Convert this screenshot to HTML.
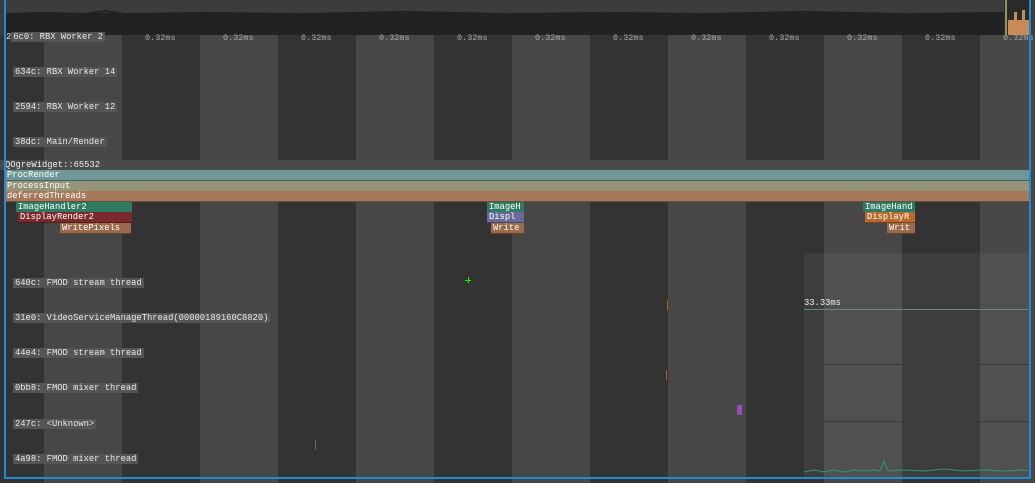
<!DOCTYPE html><html><head><style>
body{margin:0;width:1035px;height:483px;overflow:hidden;background:#333;position:relative;font-family:"Liberation Mono",monospace;font-size:8.8px;color:#ddd}
div{position:absolute;box-sizing:border-box}
.c{top:35px;bottom:0;width:78px;background:#474747}
.t{top:33px;font-size:8.5px;color:#aaa}
.l{left:13px;height:11px;line-height:11px;color:#e8e8e8}
.l span{background:#555;padding:0 2px}
.b{height:11px;line-height:11px;color:#fff;padding-left:2px;white-space:nowrap;overflow:hidden;border-bottom:1px solid rgba(0,0,0,.35)}
</style></head><body>
<div class="c" style="left:44px"></div><div class="c" style="left:200px"></div><div class="c" style="left:356px"></div><div class="c" style="left:512px"></div><div class="c" style="left:668px"></div><div class="c" style="left:824px"></div><div class="c" style="left:980px"></div>
<div style="left:0;top:0;width:1035px;height:35px;background:#3c3c3c"></div>
<div style="left:5px;top:13px;width:1000px;height:22px;background:#222"></div>
<svg style="position:absolute;left:5px;top:8px" width="1000" height="8"><polyline fill="none" stroke="#222" stroke-width="2" points="0,6 40,5 80,6 100,3 120,6 200,5 300,6 400,4 500,6 600,5 700,6 800,4 900,6 1000,5"/></svg>
<div style="left:1004px;top:0;width:26px;height:35px;background:#2a2a2a"></div>
<svg style="position:absolute;left:1004px;top:0" width="26" height="35"><rect x="1" y="0" width="2" height="35" fill="#8a9a5a"/><rect x="4" y="20" width="22" height="15" fill="#c98a5a"/><rect x="10" y="12" width="3" height="23" fill="#c98a5a"/><rect x="18" y="10" width="3" height="25" fill="#c98a5a"/></svg>
<div class="t" style="left:145px">0.32ms</div><div class="t" style="left:223px">0.32ms</div><div class="t" style="left:301px">0.32ms</div><div class="t" style="left:379px">0.32ms</div><div class="t" style="left:457px">0.32ms</div><div class="t" style="left:535px">0.32ms</div><div class="t" style="left:613px">0.32ms</div><div class="t" style="left:691px">0.32ms</div><div class="t" style="left:769px">0.32ms</div><div class="t" style="left:847px">0.32ms</div><div class="t" style="left:925px">0.32ms</div><div class="t" style="left:1003px">0.32ms</div>
<div class="l" style="top:32px;left:6px">2<span>6c0: RBX Worker 2</span></div>
<div class="l" style="top:67px"><span>634c: RBX Worker 14</span></div>
<div class="l" style="top:102px"><span>2594: RBX Worker 12</span></div>
<div class="l" style="top:137px"><span>38dc: Main/Render</span></div>
<div style="left:0;top:160px;width:1030px;height:10px;background:#4a4a4a;line-height:10px;padding-left:5px;color:#eee">QOgreWidget::65532</div>
<div class="b" style="left:5px;top:170px;width:1025px;background:#6f9797">ProcRender</div>
<div class="b" style="left:5px;top:181px;width:1025px;background:#949478">ProcessInput</div>
<div class="b" style="left:5px;top:191px;width:1025px;background:#a5795a">deferredThreads</div>
<div class="b" style="left:16px;top:202px;width:116px;background:#2f7a62">ImageHandler2</div>
<div class="b" style="left:18px;top:212px;width:114px;background:#7a2a2a">DisplayRender2</div>
<div class="b" style="left:60px;top:223px;width:71px;background:#9a6a4a">WritePixels</div>
<div class="b" style="left:487px;top:202px;width:37px;background:#2f7a62">ImageH</div>
<div class="b" style="left:487px;top:212px;width:37px;background:#6a6a9a">Displ</div>
<div class="b" style="left:491px;top:223px;width:33px;background:#9a6a4a">Write</div>
<div class="b" style="left:863px;top:202px;width:52px;background:#2f7a62">ImageHand</div>
<div class="b" style="left:865px;top:212px;width:50px;background:#b86a2a">DisplayR</div>
<div class="b" style="left:887px;top:223px;width:28px;background:#9a6a4a">Writ</div>
<div style="left:804px;top:253px;width:226px;height:224px;background:rgba(255,255,255,.05)"></div>
<div style="left:804px;top:364px;width:226px;height:1px;background:#3a3a3a"></div>
<div style="left:804px;top:421px;width:226px;height:1px;background:#3a3a3a"></div>
<div style="left:804px;top:309px;width:226px;height:1px;background:#5a8a80"></div>
<div style="left:804px;top:298px;color:#eee">33.33ms</div>
<svg style="position:absolute;left:804px;top:455px" width="226" height="22"><polyline fill="none" stroke="#2a9a6a" stroke-width="1" points="0,17 10,15 20,17 30,15 40,17 50,15 60,16 70,15 76,16 80,6 84,16 100,15 120,16 140,14 160,16 180,15 200,16 220,15 224,16"/></svg>
<div class="l" style="top:278px"><span>640c: FMOD stream thread</span></div>
<div class="l" style="top:313px"><span>31e0: VideoServiceManageThread(00000189160C8820)</span></div>
<div class="l" style="top:348px"><span>44e4: FMOD stream thread</span></div>
<div class="l" style="top:383px"><span>0bb8: FMOD mixer thread</span></div>
<div class="l" style="top:419px"><span>247c: &lt;Unknown&gt;</span></div>
<div class="l" style="top:454px"><span>4a98: FMOD mixer thread</span></div>
<div style="left:465px;top:280px;width:6px;height:1px;background:#0f0"></div><div style="left:468px;top:277px;width:1px;height:6px;background:#0f0"></div>
<div style="left:667px;top:300px;width:1px;height:10px;background:#b8601a"></div>
<div style="left:666px;top:370px;width:1px;height:10px;background:#b8601a"></div>
<div style="left:737px;top:405px;width:5px;height:10px;background:#9a4ab8"></div>
<div style="left:315px;top:440px;width:1px;height:10px;background:#666"></div>
<div style="left:4px;top:0;width:2px;height:479px;background:#1e8ad8"></div>
<div style="left:1029px;top:0;width:2px;height:479px;background:#1e8ad8"></div>
<div style="left:4px;top:477px;width:1027px;height:2px;background:#1e8ad8"></div>
</body></html>
